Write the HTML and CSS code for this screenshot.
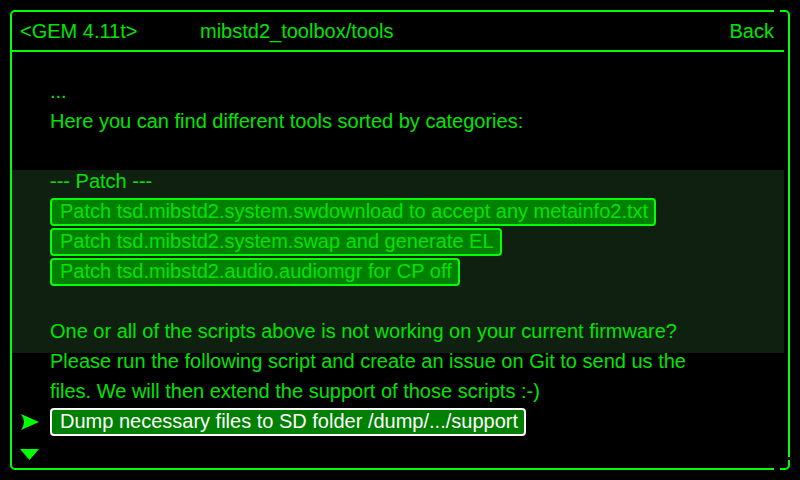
FILE: index.html
```html
<!DOCTYPE html>
<html>
<head>
<meta charset="utf-8">
<link rel="stylesheet" href="styles.css">
</head>
<body>
<div class="screen">
  <svg class="frame" width="800" height="480" viewBox="0 0 800 480">
    <path d="M774 11 H15 A4 4 0 0 0 11 15 V465 A4 4 0 0 0 15 469 H774" />
    <path d="M780 11 H785 A4 4 0 0 1 789 15 V457" />
    <path d="M789 460 V465 A4 4 0 0 1 785 469 H780" />
    <path d="M12 51 H784" />
  </svg>
  <div class="header">
    <span class="h-left">&lt;GEM 4.11t&gt;</span>
    <span class="h-title">mibstd2_toolbox/tools</span>
    <span class="h-back">Back</span>
  </div>
  <div class="content">
    <div class="row"><span class="mark"></span><span class="txt">...</span></div>
    <div class="row"><span class="mark"></span><span class="txt">Here you can find different tools sorted by categories:</span></div>
    <div class="row"><span class="mark"></span><span class="txt"></span></div>
    <div class="band">
      <div class="row"><span class="mark"></span><span class="txt">--- Patch ---</span></div>
      <div class="row"><span class="mark"></span><span class="btn">Patch tsd.mibstd2.system.swdownload to accept any metainfo2.txt</span></div>
      <div class="row"><span class="mark"></span><span class="btn">Patch tsd.mibstd2.system.swap and generate EL</span></div>
      <div class="row"><span class="mark"></span><span class="btn">Patch tsd.mibstd2.audio.audiomgr for CP off</span></div>
      <div class="row"><span class="mark"></span><span class="txt"></span></div>
      <div class="row"><span class="mark"></span><span class="txt">One or all of the scripts above is not working on your current firmware?</span></div>
    </div>
    <div class="row"><span class="mark"></span><span class="txt">Please run the following script and create an issue on Git to send us the</span></div>
    <div class="row"><span class="mark"></span><span class="txt">files. We will then extend the support of those scripts :-)</span></div>
    <div class="row"><span class="mark"><svg class="arrow" width="18" height="16" viewBox="0 0 18 16"><path d="M0 0 L18 8 L0 16 Q6 8 0 0 Z"/></svg></span><span class="btn sel">Dump necessary files to SD folder /dump/.../support</span></div>
    <div class="row"><span class="mark"><svg class="down" width="19" height="11" viewBox="0 0 19 11"><polygon points="0,0 19,0 9.5,11"/></svg></span></div>
  </div>
</div>
</body>
</html>
```
FILE: styles.css
```css
html, body {
  margin: 0;
  padding: 0;
  background: #000;
}
.screen {
  position: relative;
  width: 800px;
  height: 480px;
  overflow: hidden;
  background: #000;
  font-family: "Liberation Sans", Arial, sans-serif;
  font-size: 20px;
  color: #00e400;
}
.frame {
  position: absolute;
  left: 0;
  top: 0;
}
.frame path {
  fill: none;
  stroke: #00ff00;
  stroke-width: 2;
}
.header {
  margin: 12px 12px 0 12px;
  height: 38px;
  line-height: 38px;
  display: grid;
  grid-template-columns: 180px 1fr auto;
  padding: 0 14px 0 8px;
  white-space: nowrap;
}
.content {
  margin: 2px 16px 0 12px;
  padding-top: 28px;
}
.row {
  height: 30px;
  line-height: 22px;
  display: grid;
  grid-template-columns: 38px auto;
  justify-content: start;
  align-items: start;
  white-space: nowrap;
}
.mark {
  padding-left: 9px;
  display: flex;
  align-items: flex-start;
}
.arrow {
  margin-top: 4px;
  fill: #00ff00;
}
.down {
  margin-top: 9px;
  margin-left: -1px;
  fill: #00ff00;
}
.band {
  background: #102010;
  padding-bottom: 3px;
  margin-bottom: -3px;
}
.btn {
  margin-top: -2px;
  border: 2px solid #00ff00;
  border-radius: 4px;
  background: #008000;
  padding: 0 6px 2px 8px;
  color: #00e400;
}
.btn.sel {
  border-color: #ffffff;
  color: #ffffff;
}
```
